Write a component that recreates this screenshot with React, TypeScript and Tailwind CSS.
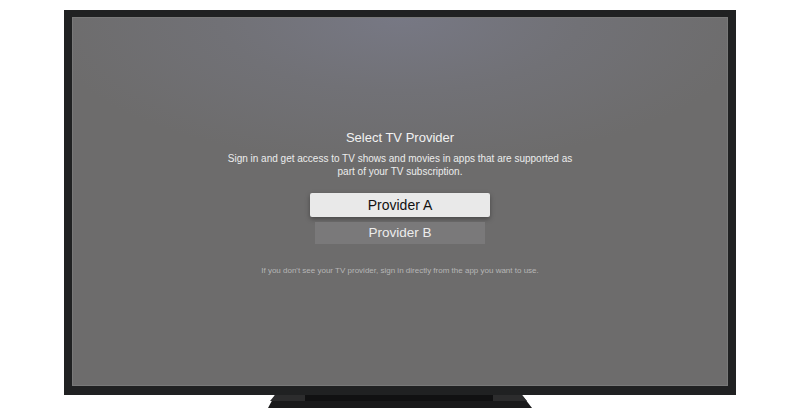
// App.tsx
// ================== TV PROVIDER SCREEN
const providers = ["Provider A", "Provider B"];

// ================== STAND
const Stand = () => (
	<svg width="264" height="13" viewBox="0 0 264 13" className="block">
		<polygon points="7,0 254,0 264,13 0,13" fill="#1a1a1b" />
		<polygon points="7,0 37,0 37,6 2,6" fill="#2c2c2d" />
		<rect x="37" y="0" width="188" height="6" fill="#111112" />
		<polygon points="225,0 254,0 259,6 225,6" fill="#2c2c2d" />
	</svg>
);

// ================== APP
const App = () => {
	return (
		<div
			className="w-[800px] h-[420px] bg-white flex flex-col items-center pt-[10px]"
			style={{ fontFamily: '"Liberation Sans", Arial, sans-serif' }}
		>
			{/* ======================= BEZEL */}
			<div className="w-[672px] h-[385px] bg-[#202122] pl-[8px] pr-[8px] pt-[7px] pb-[9px]">
				{/* ===================== SCREEN */}
				<div className="w-full h-full border border-[#797979] bg-[radial-gradient(ellipse_55%_40%_at_50%_0%,#777884_0%,#717176_50%,#6d6c6c_100%)] flex flex-col items-center pt-[112px]">
					<h1 className="text-[13px] leading-4 text-[#f2f2f2]">Select TV Provider</h1>
					<p className="mt-[6px] w-[360px] text-center text-[10px] leading-[13px] text-[#ececec]">
						Sign in and get access to TV shows and movies in apps that are supported as part of your TV
						subscription.
					</p>

					{/* =================== PROVIDER LIST */}
					<div className="mt-[15px] flex flex-col items-center gap-[5px]">
						{providers.map((name, i) =>
							i === 0 ? (
								<div
									key={name}
									className="w-[180px] h-[24px] rounded-[2px] bg-[#e9e9e9] shadow-[0_2px_5px_rgba(0,0,0,0.35)] flex items-center justify-center text-[14px] text-[#111]"
								>
									{name}
								</div>
							) : (
								<div
									key={name}
									className="w-[170px] h-[22px] bg-[#7a797a] flex items-center justify-center text-[13.5px] text-[#ececec]"
								>
									{name}
								</div>
							),
						)}
					</div>

					<p className="mt-[22px] text-[8px] leading-[10px] text-[#b6b6b6]">
						If you don't see your TV provider, sign in directly from the app you want to use.
					</p>
				</div>
			</div>
			<Stand />
		</div>
	);
};

export default App;
